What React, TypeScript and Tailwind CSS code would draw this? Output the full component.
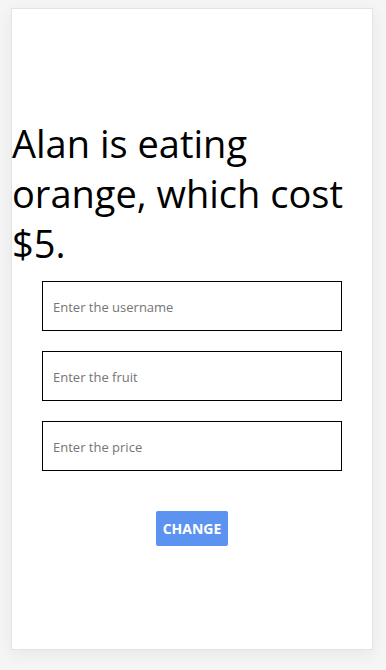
import { useState } from 'react';

export default function App() {
  const [name, setName] = useState('');
  const [fruit, setFruit] = useState('');
  const [price, setPrice] = useState('');

  return (
    <div className="min-h-screen bg-[#f5f5f5] pt-[8px] font-['Open_Sans',sans-serif]">
      <div className="ml-[11px] flex h-[642px] w-[362px] flex-col border border-[#e3e3e3] bg-white pt-[109px] shadow-[0_4px_16px_rgba(0,0,0,0.06)]">
        {/* 标题 */}
        <h1 className="text-[38px] leading-[50px] text-black">
          Alan is eating orange, which cost $5.
        </h1>

        <div className="mt-[13px] flex flex-col items-center gap-[20px]">
          <input
            className="h-[50px] w-[300px] border border-black px-[10px] pt-[1px] text-[13px] text-black outline-none placeholder:text-[#757575]"
            placeholder="Enter the username"
            value={name}
            onChange={(e) => setName(e.target.value)}
          />
          <input
            className="h-[50px] w-[300px] border border-black px-[10px] pt-[1px] text-[13px] text-black outline-none placeholder:text-[#757575]"
            placeholder="Enter the fruit"
            value={fruit}
            onChange={(e) => setFruit(e.target.value)}
          />
          <input
            className="h-[50px] w-[300px] border border-black px-[10px] pt-[1px] text-[13px] text-black outline-none placeholder:text-[#757575]"
            placeholder="Enter the price"
            value={price}
            onChange={(e) => setPrice(e.target.value)}
          />
        </div>

        <div className="mt-[40px] flex justify-center">
          <button className="h-[35px] w-[72px] rounded-[2px] bg-[#5c92f0] text-[14px] font-bold text-white">
            CHANGE
          </button>
        </div>
      </div>
    </div>
  );
}
